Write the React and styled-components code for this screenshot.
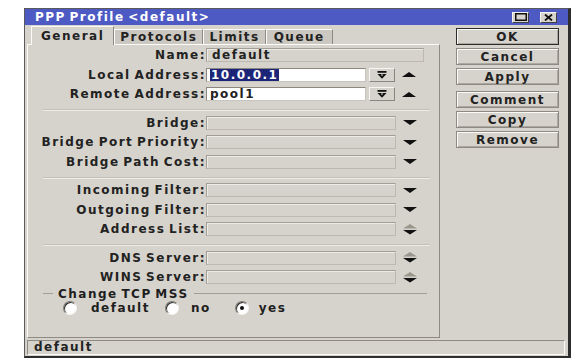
import React from 'react';
import styled, { createGlobalStyle } from 'styled-components';

const GlobalStyle = createGlobalStyle`
  html, body {
    margin: 0;
    padding: 0;
    background: #ffffff;
  }
  body {
    font-family: "DejaVu Sans", "Liberation Sans", sans-serif;
    font-weight: bold;
    font-size: 12px;
    letter-spacing: 1.5px;
    word-spacing: -2px;
    color: #1e1e1e;
  }
`;

const BG = '#d6d3cc';

const Window = styled.div`
  margin: 8px 0 0 24px;
  width: 547px;
  box-sizing: border-box;
  background: ${BG};
  border-left: 1px solid #5a5a5a;
  border-top: 1px solid #5a5a5a;
  border-right: 3px solid #2e2e2e;
  border-bottom: 2px solid #2e2e2e;
  display: flex;
  flex-direction: column;
`;

const TitleBar = styled.div`
  height: 16px;
  background: #4e5ac4;
  color: #ffffff;
  display: flex;
  align-items: center;
  padding-left: 10px;
  line-height: 16px;
`;

const TitleButtons = styled.div`
  margin-left: auto;
  display: flex;
  gap: 11px;
  padding-right: 11px;
`;

const TitleButton = styled.div`
  width: 17px;
  height: 11px;
  box-sizing: border-box;
  background: ${BG};
  border: 1px solid #f4f3ef;
  border-right-color: #404040;
  border-bottom-color: #404040;
  display: flex;
  align-items: center;
  justify-content: center;
`;

const Body = styled.div`
  display: flex;
  padding: 1px 0 0 2px;
`;

const LeftPane = styled.div`
  width: 413px;
  display: flex;
  flex-direction: column;
`;

const TabStrip = styled.div`
  height: 18px;
  display: flex;
  align-items: flex-end;
  padding-left: 4px;
  position: relative;
  z-index: 1;
`;

const Tab = styled.div`
  box-sizing: border-box;
  height: ${(p) => (p.$active ? '19px' : '15px')};
  margin-bottom: ${(p) => (p.$active ? '-1px' : '0')};
  padding: 0 ${(p) => p.$pad || 6}px;
  display: flex;
  align-items: center;
  background: ${(p) => (p.$active ? BG : '#cbc8c1')};
  border-top: 1px solid #fbfaf7;
  border-left: 1px solid #fbfaf7;
  border-right: 1px solid #8e8a83;
  color: #222;
`;

const Panel = styled.div`
  height: 294px;
  box-sizing: border-box;
  border-top: 1px solid #fbfaf7;
  border-left: 1px solid #fbfaf7;
  border-right: 1px solid #8e8a83;
  border-bottom: 1px solid #8e8a83;
  padding-top: 3px;
  display: flex;
  flex-direction: column;
`;

const Section = styled.div`
  display: flex;
  flex-direction: column;
  gap: 5.5px;
`;

const Separator = styled.div`
  margin: 8px 9px 4.5px 15px;
  border-top: 1px solid #c4c0b8;
  border-bottom: 1px solid #eeece7;
`;

const Row = styled.div`
  display: flex;
  align-items: center;
  height: 14px;
`;

const Label = styled.div`
  width: 178px;
  flex-shrink: 0;
  text-align: right;
  white-space: nowrap;
  line-height: 14px;
  color: #222;
`;

const Field = styled.div`
  box-sizing: border-box;
  width: ${(p) => p.$w}px;
  height: 14px;
  line-height: 12px;
  padding-left: ${(p) => (p.$white ? 3 : 5)}px;
  background: ${(p) => (p.$white ? '#ffffff' : BG)};
  border: 1px solid ${(p) => (p.$white ? '#8c8880' : '#a29e96')};
  border-right-color: ${(p) => (p.$white ? '#c8c5be' : '#bdb9b1')};
  border-bottom-color: ${(p) => (p.$white ? '#c8c5be' : '#bdb9b1')};
  box-shadow: ${(p) => (p.$white ? 'none' : 'inset 1px 1px 0 #ecebe6')};
  white-space: nowrap;
  overflow: hidden;
  color: #222;
`;

const Selected = styled.span`
  background: #1c2577;
  color: #ffffff;
  padding: 0 1px 0 1px;
`;

const DropButton = styled.div`
  box-sizing: border-box;
  width: 26px;
  height: 14px;
  margin-left: 3px;
  background: ${BG};
  border: 1px solid #f6f5f1;
  border-right-color: #8a8780;
  border-bottom-color: #8a8780;
  display: flex;
  align-items: center;
  justify-content: center;
`;

const Control = styled.div`
  width: 28px;
  height: 14px;
  display: flex;
  align-items: center;
  justify-content: center;
`;

const Group = styled.div`
  margin-top: 3px;
  display: flex;
  flex-direction: column;
`;

const Legend = styled.div`
  height: 13px;
  display: flex;
  align-items: center;
  padding: 0 12px 0 15px;
  gap: 5px;
`;

const LegendLine = styled.div`
  height: 1px;
  background: #a29e96;
  width: ${(p) => (p.$grow ? 'auto' : '10px')};
  flex: ${(p) => (p.$grow ? 1 : 'none')};
`;

const RadioRow = styled.div`
  height: 13px;
  margin-top: 1px;
  padding-left: 35px;
  display: flex;
  align-items: center;
`;

const RadioOption = styled.div`
  display: flex;
  align-items: center;
  gap: ${(p) => p.$gap}px;
  margin-right: ${(p) => p.$after || 0}px;
`;

const RadioCircle = styled.div`
  width: 14px;
  height: 14px;
  box-sizing: border-box;
  border-radius: 50%;
  background: #ffffff;
  border: 1px solid #7c7972;
  border-right-color: #f4f3ef;
  border-bottom-color: #f4f3ef;
  box-shadow: inset 1px 1px 0 #2a2a2a;
  display: flex;
  align-items: center;
  justify-content: center;

  &::after {
    content: '';
    width: 4px;
    height: 4px;
    border-radius: 50%;
    background: ${(p) => (p.$checked ? '#111' : 'transparent')};
  }
`;

const ButtonColumn = styled.div`
  margin-left: 16px;
  padding-top: 2px;
  display: flex;
  flex-direction: column;
  gap: 3px;
`;

const Button = styled.div`
  box-sizing: border-box;
  width: 103px;
  height: 17px;
  margin-top: ${(p) => (p.$space ? 3 : 0)}px;
  display: flex;
  align-items: center;
  justify-content: center;
  background: ${BG};
  border: 1px solid ${(p) => (p.$default ? '#2c2c2c' : '#8e8a83')};
  box-shadow: inset 1px 1px 0 #fbfaf7, inset -1px -1px 0 #aca89f;
  color: #222;
`;

const StatusBar = styled.div`
  margin: 2px 3px 1px 2px;
  height: 15px;
  box-sizing: border-box;
  border: 1px solid #8e8a83;
  border-right-color: #fbfaf7;
  border-bottom-color: #fbfaf7;
  padding-left: 6px;
  line-height: 13px;
  color: #222;
`;

const Tri = ({ dir, color = '#111' }) => (
  <svg width="14" height="5" viewBox="0 0 14 5">
    <polygon points={dir === 'up' ? '0,5 14,5 7,0' : '0,0 14,0 7,5'} fill={color} />
  </svg>
);

const UpDown = () => (
  <svg width="14" height="11" viewBox="0 0 14 11">
    <polygon points="0,4.5 14,4.5 7,0" fill="#9a978f" />
    <polygon points="0,6 14,6 7,10.5" fill="#111" />
  </svg>
);

const DropIcon = () => (
  <svg width="10" height="8" viewBox="0 0 10 8">
    <rect x="0.5" y="0" width="9" height="1.8" fill="#111" />
    <polygon points="0.5,3 9.5,3 5,7.8" fill="#111" />
    <rect x="4.5" y="3" width="1" height="2" fill="#d6d3cc" />
  </svg>
);

const FieldRow = ({ label, kind, value }) => (
  <Row>
    <Label>{label}</Label>
    {kind === 'name' && <Field $w={218}>{value}</Field>}
    {kind === 'combo' && (
      <>
        <Field $w={160} $white>
          {value}
        </Field>
        <DropButton>
          <DropIcon />
        </DropButton>
        <Control>
          <Tri dir="up" />
        </Control>
      </>
    )}
    {(kind === 'down' || kind === 'updown') && (
      <>
        <Field $w={190} />
        <Control>{kind === 'down' ? <Tri dir="down" /> : <UpDown />}</Control>
      </>
    )}
  </Row>
);

export default function App() {
  return (
    <>
      <GlobalStyle />
      <Window>
        <TitleBar>
          PPP Profile &lt;default&gt;
          <TitleButtons>
            <TitleButton>
              <svg width="12" height="8" viewBox="0 0 12 8">
                <rect x="0.75" y="0.75" width="10.5" height="6.5" fill="none" stroke="#111" strokeWidth="1.5" />
              </svg>
            </TitleButton>
            <TitleButton>
              <svg width="9" height="7" viewBox="0 0 9 7">
                <path d="M1 0.5 L8 6.5 M8 0.5 L1 6.5" stroke="#111" strokeWidth="1.8" />
              </svg>
            </TitleButton>
          </TitleButtons>
        </TitleBar>
        <Body>
          <LeftPane>
            <TabStrip>
              <Tab $active $pad={9}>General</Tab>
              <Tab $pad={5}>Protocols</Tab>
              <Tab $pad={5}>Limits</Tab>
              <Tab $pad={7}>Queue</Tab>
            </TabStrip>
            <Panel>
              <Section>
                <FieldRow label="Name:" kind="name" value="default" />
                <FieldRow label="Local Address:" kind="combo" value={<Selected>10.0.0.1</Selected>} />
                <FieldRow label="Remote Address:" kind="combo" value="pool1" />
              </Section>
              <Separator />
              <Section>
                <FieldRow label="Bridge:" kind="down" />
                <FieldRow label="Bridge Port Priority:" kind="down" />
                <FieldRow label="Bridge Path Cost:" kind="down" />
              </Section>
              <Separator />
              <Section>
                <FieldRow label="Incoming Filter:" kind="down" />
                <FieldRow label="Outgoing Filter:" kind="down" />
                <FieldRow label="Address List:" kind="updown" />
              </Section>
              <Separator />
              <Section>
                <FieldRow label="DNS Server:" kind="updown" />
                <FieldRow label="WINS Server:" kind="updown" />
              </Section>
              <Group>
                <Legend>
                  <LegendLine />
                  <span>Change TCP MSS</span>
                  <LegendLine $grow />
                </Legend>
                <RadioRow>
                  <RadioOption $gap={14} $after={15}>
                    <RadioCircle />
                    default
                  </RadioOption>
                  <RadioOption $gap={12} $after={24}>
                    <RadioCircle />
                    no
                  </RadioOption>
                  <RadioOption $gap={10}>
                    <RadioCircle $checked />
                    yes
                  </RadioOption>
                </RadioRow>
              </Group>
            </Panel>
          </LeftPane>
          <ButtonColumn>
            <Button $default>OK</Button>
            <Button>Cancel</Button>
            <Button>Apply</Button>
            <Button $space>Comment</Button>
            <Button>Copy</Button>
            <Button>Remove</Button>
          </ButtonColumn>
        </Body>
        <StatusBar>default</StatusBar>
      </Window>
    </>
  );
}
